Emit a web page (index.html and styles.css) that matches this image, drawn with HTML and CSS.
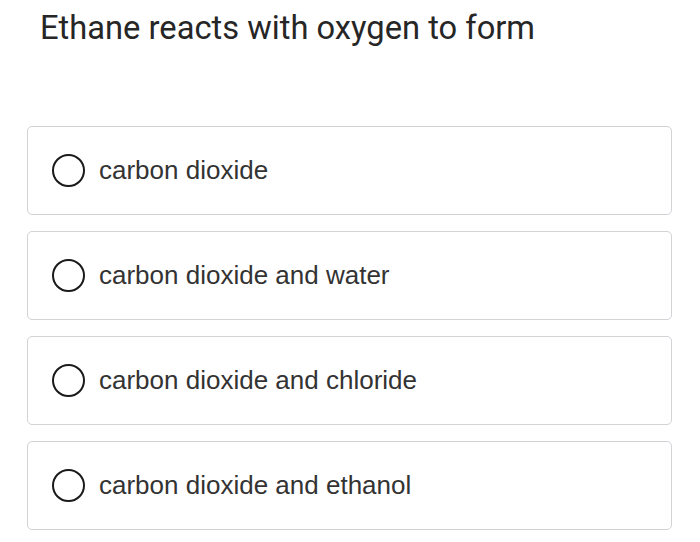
FILE: index.html
```html
<!DOCTYPE html>
<html>
<head>
<meta charset="utf-8">
<link rel="stylesheet" href="styles.css">
</head>
<body>
<div class="page">
  <h1 class="question">Ethane reacts with oxygen to form</h1>
  <div class="options">
    <label class="option"><span class="radio"></span><span class="label">carbon dioxide</span></label>
    <label class="option"><span class="radio"></span><span class="label">carbon dioxide and water</span></label>
    <label class="option"><span class="radio"></span><span class="label">carbon dioxide and chloride</span></label>
    <label class="option"><span class="radio"></span><span class="label">carbon dioxide and ethanol</span></label>
  </div>
</div>
</body>
</html>
```
FILE: styles.css
```css
html, body {
  margin: 0;
  padding: 0;
  background: #ffffff;
}
.page {
  padding: 8px 28px 0 27px;
  font-family: "Liberation Sans", Arial, sans-serif;
}
.question {
  margin: 0 0 0 13px;
  font-family: Roboto, "Liberation Sans", sans-serif;
  font-weight: 400;
  font-size: 32.7px;
  line-height: 40px;
  color: #262626;
}
.options {
  margin-top: 78px;
  display: flex;
  flex-direction: column;
  gap: 16px;
}
.option {
  box-sizing: border-box;
  display: flex;
  align-items: center;
  height: 89px;
  border: 1.5px solid #d2d2d7;
  border-radius: 5px;
  padding-left: 24px;
}
.radio {
  width: 29px;
  height: 29px;
  border: 2px solid #1a1a1a;
  border-radius: 50%;
  flex: none;
}
.label {
  margin-left: 14px;
  font-size: 26px;
  color: #333333;
}
```
